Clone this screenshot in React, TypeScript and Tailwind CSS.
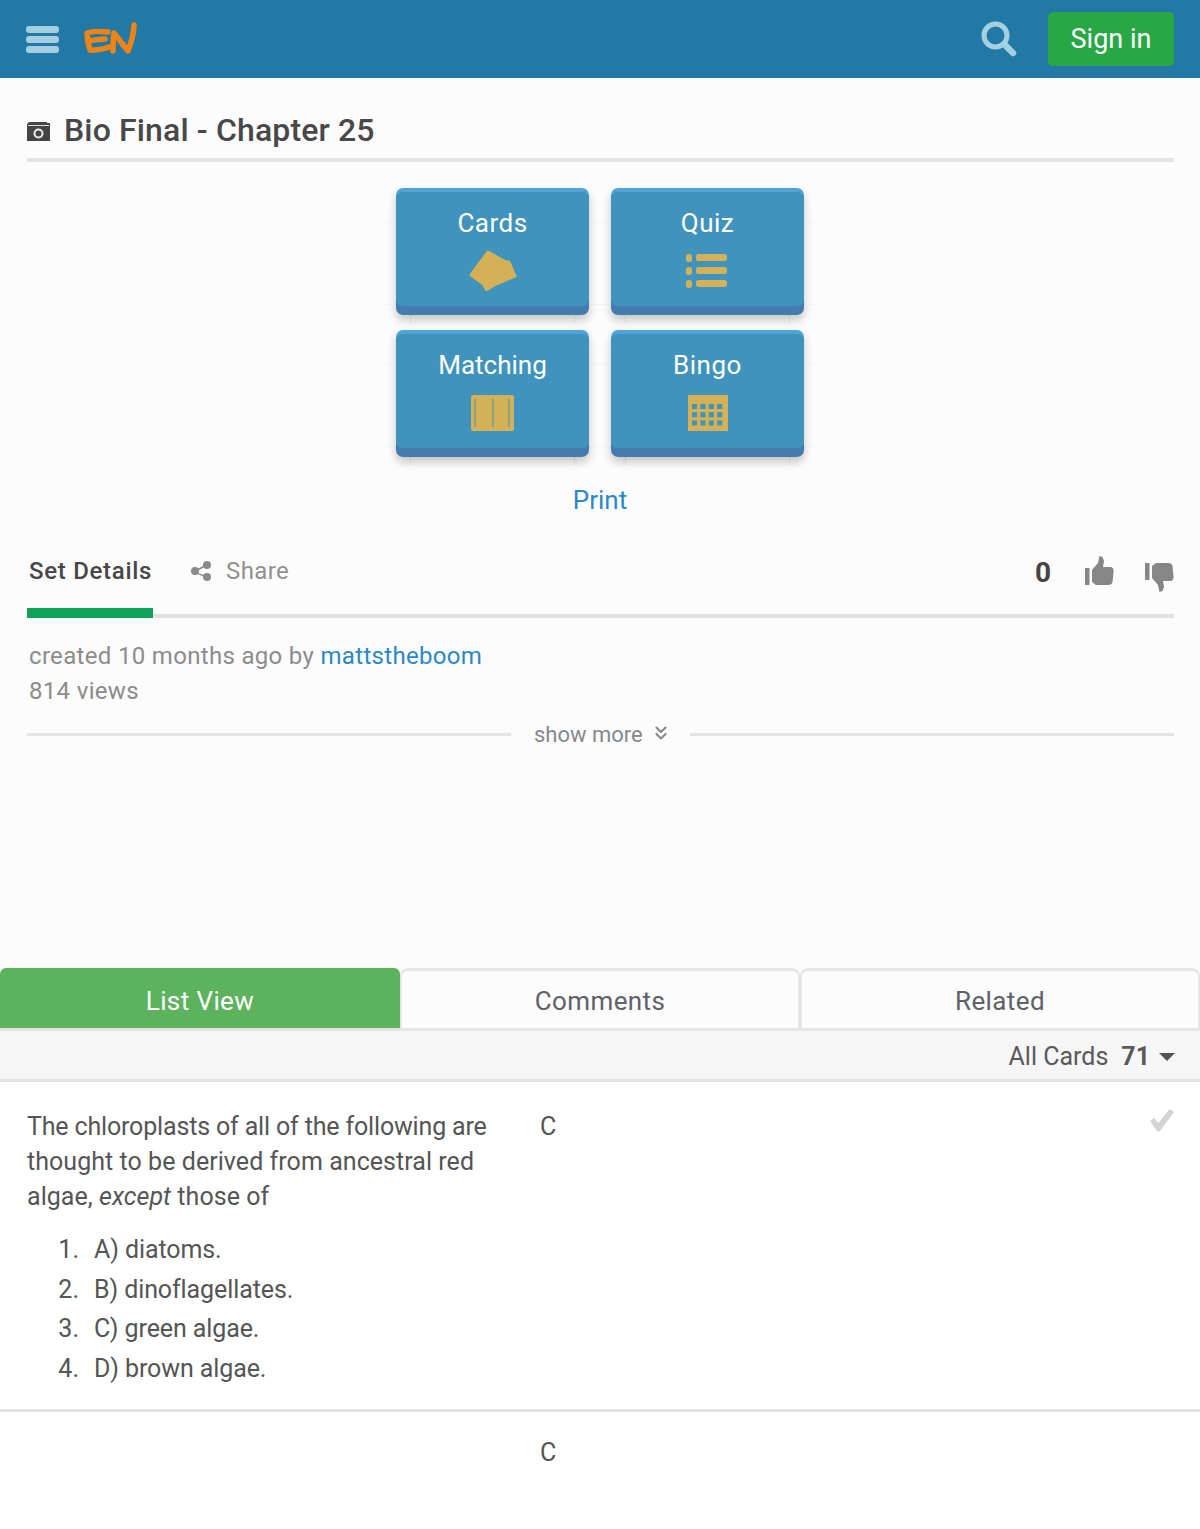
const font = { fontFamily: 'Roboto, sans-serif' }

function CardsIcon() {
  return (
    <svg width="48" height="42" viewBox="0 0 48 42" className="-mt-[1px] fill-[#d4b057] stroke-[#d4b057]" strokeWidth="3" strokeLinejoin="round">
      <path d="M19 2 L36 11.5 L40 12 L46 26 L28 33.5 L17.5 39.5 L14 33.5 L2 25 Z" />
    </svg>
  )
}

function QuizIcon() {
  return (
    <svg width="42" height="36" viewBox="0 0 42 36" className="-ml-[2px] mt-[2px] fill-[#d4b057]">
      <rect x="0" y="0" width="6" height="8" rx="2.5" />
      <rect x="10" y="0" width="31" height="7" rx="2.5" />
      <rect x="0" y="13" width="6" height="8" rx="2.5" />
      <rect x="10" y="13" width="31" height="7" rx="2.5" />
      <rect x="0" y="26" width="6" height="8" rx="2.5" />
      <rect x="10" y="26" width="31" height="7" rx="2.5" />
    </svg>
  )
}

function MatchingIcon() {
  return (
    <svg width="43" height="36" viewBox="0 0 43 36">
      <rect width="43" height="36" rx="2" fill="#d4b057" />
      <rect x="3.5" y="4" width="1" height="28" fill="#3f93bc" />
      <rect x="21.5" y="4" width="1" height="28" fill="#3f93bc" />
      <rect x="37.5" y="4" width="1" height="28" fill="#3f93bc" />
    </svg>
  )
}

function BingoIcon() {
  const cells = []
  for (let r = 0; r < 3; r++) {
    for (let c = 0; c < 4; c++) {
      cells.push(<rect key={`${r}-${c}`} x={4 + c * 8.4} y={9 + r * 8.2} width="5" height="5" fill="#3f93bc" />)
    }
  }
  return (
    <svg width="40" height="36" viewBox="0 0 40 36">
      <rect width="40" height="36" fill="#d4b057" />
      {cells}
    </svg>
  )
}

function ThumbIcon({ className }: { className: string }) {
  return (
    <svg width="29" height="30" viewBox="0 0 29 30" className={className}>
      <rect x="0" y="12" width="4.5" height="17" />
      <path d="M7 14 L13 7 L14.5 0 L17.5 1 L19 5 L18 11 L26 11 Q29 12 28.5 16 L27.5 26 Q27 29 23 29 L11 29 L7 26 Z" />
    </svg>
  )
}

function GameButton({ label, tracking, children }: { label: string; tracking: string; children: React.ReactNode }) {
  return (
    <div className="relative h-[127px] w-[193px]">
      <div className="absolute -inset-x-[12px] top-[34px] bottom-[10px] border-y border-[#f6f6f6]" />
      <div className="absolute inset-x-[14px] -bottom-[8px] h-[20px] border-x border-[#ececec]" />
      <div className="relative h-full rounded-[7px] bg-[linear-gradient(#4fa3d9_50%,#467bad_50%)] pt-[4px] pb-[9px] shadow-[0_5px_10px_rgba(0,0,0,0.22)]">
        <div className="flex h-full flex-col items-center rounded-[6px] bg-[#3f93bc]">
          <span className={`mt-[14px] text-[26px] leading-[34px] text-white ${tracking}`}>{label}</span>
          <div className="mt-[11px] flex h-[40px] items-center justify-center">{children}</div>
        </div>
      </div>
    </div>
  )
}

function Tab({ label, active }: { label: string; active?: boolean }) {
  if (active) {
    return (
      <div className="flex h-[63px] w-[400px] items-center justify-center rounded-t-[6px] border-b-[3px] border-[#e4e4e4] bg-[#5cb25d] pt-[7px] text-[26px] tracking-[0.4px] text-white">
        {label}
      </div>
    )
  }
  return (
    <div className="flex h-[63px] w-[400px] items-center justify-center rounded-t-[8px] border-x-[2px] border-t-[3px] border-b-[3px] border-[#e6e6e6] bg-[#fcfcfc] pt-[4px] text-[26px] tracking-[0.4px] text-[#5f6068]">
      {label}
    </div>
  )
}

function OptionRow({ n, text }: { n: number; text: string }) {
  return (
    <li className="flex h-[39.5px] items-center">
      <span className="w-[52px] text-right">{n}.</span>
      <span className="ml-[15px] tracking-[-0.1px]">{text}</span>
    </li>
  )
}

export default function App() {
  return (
    <div style={font} className="h-[1529px] w-[1200px] overflow-hidden bg-[#fcfcfc] text-[#4a4a4a]">
      <header className="flex h-[78px] items-center justify-between bg-[#2379a6] pl-[26px] pr-[26px]">
        <div className="flex items-center">
          <div className="mt-[1px] flex h-[27px] w-[33px] flex-col justify-between">
            <div className="h-[7px] rounded-[3px] bg-[#a3cfe0]" />
            <div className="h-[7px] rounded-[3px] bg-[#a3cfe0]" />
            <div className="h-[7px] rounded-[3px] bg-[#a3cfe0]" />
          </div>
          <svg width="54" height="34" viewBox="0 0 54 34" fill="none" className="ml-[25px] -mt-[1px]" stroke="#ee8417" strokeWidth="5.5" strokeLinecap="round" strokeLinejoin="round">
            <path d="M24 10 C16 9 9 9 3 11 C3 16 4 22 6 28 C12 29 18 27 26 25" />
            <path d="M5 19 C11 18 16 17 21 17" />
            <path d="M29 29 C29 23 29 17 30 11 C35 17 39 23 44 29 C47 21 50 11 50 3" />
          </svg>
        </div>
        <div className="flex items-center">
          <svg width="36" height="36" viewBox="0 0 36 36" fill="none" className="mr-[31px]" stroke="#a3cfe0" strokeLinecap="round">
            <circle cx="14.5" cy="14.5" r="11.5" strokeWidth="5" />
            <path d="M23.5 23.5 L32 32" strokeWidth="6.5" />
          </svg>
          <div className="flex h-[54px] w-[126px] items-center justify-center rounded-[5px] bg-[#28a745] text-[27px] text-white">Sign in</div>
        </div>
      </header>

      <div className="ml-[27px] mr-[26px] mt-[32px] flex h-[52px] items-start border-b-[4px] border-[#e4e4e4]">
        <svg width="23" height="20" viewBox="0 0 23 20" className="mt-[12px]">
          <path d="M0 2 L2 0 L20 0 L20 1 L23 1 L23 19 L0 19 Z" fill="#444" />
          <rect x="1" y="3" width="21" height="1" fill="#ddd" />
          <circle cx="11.5" cy="11.5" r="4" fill="none" stroke="#eee" strokeWidth="2" />
        </svg>
        <h1 className="ml-[14px] text-[32px] font-medium leading-[40px] tracking-[0.14px] text-[#484848]">Bio Final - Chapter 25</h1>
      </div>

      <div className="mt-[26px] flex justify-center">
        <div className="grid grid-cols-[193px_193px] gap-x-[22px] gap-y-[15px]">
          <GameButton label="Cards" tracking="tracking-[0.5px]"><CardsIcon /></GameButton>
          <GameButton label="Quiz" tracking="tracking-[0.5px]"><QuizIcon /></GameButton>
          <GameButton label="Matching" tracking="tracking-[0px]"><MatchingIcon /></GameButton>
          <GameButton label="Bingo" tracking="tracking-[0.5px]"><BingoIcon /></GameButton>
        </div>
      </div>

      <div className="mt-[25px] text-center text-[26px] leading-[36px] text-[#2b88c8]">Print</div>

      <div className="ml-[27px] mr-[26px] mt-[34px] flex h-[66px] items-start border-b-[4px] border-[#e2e2e2]">
        <div className="relative h-[62px] w-[127px]">
          <span className="ml-[2px] block text-[24px] font-medium leading-[38px] tracking-[0.7px] text-[#474747]">Set Details</span>
          <div className="absolute -bottom-[4px] left-0 h-[10px] w-[126px] bg-[#0fa359]" />
        </div>
        <svg width="20" height="20" viewBox="0 0 20 20" className="ml-[37px] mt-[9px] fill-[#8a8a8a]">
          <circle cx="16" cy="4" r="4" />
          <circle cx="4" cy="10" r="4" />
          <circle cx="16" cy="16" r="4" />
          <path d="M4 9 L16 3 L16 5 L4 11 L16 15 L16 17 L4 12 Z" />
        </svg>
        <span className="ml-[15px] text-[24px] leading-[38px] tracking-[0.4px] text-[#919191]">Share</span>
        <span className="ml-auto mt-[2px] text-[28px] font-bold leading-[38px] text-[#444]">0</span>
        <ThumbIcon className="ml-[34px] mt-[4px] fill-[#868686]" />
        <ThumbIcon className="ml-[31px] mt-[10px] rotate-180 scale-x-[-1] fill-[#868686]" />
      </div>

      <div className="ml-[29px] mt-[21px] text-[24px] leading-[35px] tracking-[0.32px] text-[#8c8c8c]">
        <div>
          created 10 months ago by <span className="text-[#2b88c8]">mattstheboom</span>
        </div>
        <div>814 views</div>
      </div>

      <div className="ml-[27px] mr-[26px] mt-[5px] flex h-[40px] items-center">
        <div className="h-[3px] w-[484px] bg-[#e4e4e4]" />
        <span className="ml-[23px] text-[22px] text-[#84898f]">show more</span>
        <svg width="22" height="22" viewBox="0 0 24 24" fill="none" stroke="#84898f" strokeWidth="2.2" strokeLinecap="round" strokeLinejoin="round" className="ml-[7px] -mt-[2px]">
          <path d="m7 6 5 5 5-5" />
          <path d="m7 13 5 5 5-5" />
        </svg>
        <div className="ml-[18px] h-[3px] flex-1 bg-[#e4e4e4]" />
      </div>

      <div className="mt-[214px] flex h-[63px]">
        <Tab label="List View" active />
        <Tab label="Comments" />
        <Tab label="Related" />
      </div>

      <div className="flex h-[51px] items-center justify-end border-b-[3px] border-[#e4e4e4] bg-[#f6f6f6] pr-[25px] pt-[3px] text-[25px] text-[#5a5a5a]">
        <span>All Cards</span>
        <span className="ml-[13px] font-bold">71</span>
        <span className="ml-[9px] mt-[1px] h-0 w-0 border-x-[8px] border-t-[8px] border-x-transparent border-t-[#555]" />
      </div>

      <div className="flex h-[330px] border-b-[3px] border-[#e4e4e4] bg-white pl-[27px] pr-[26px] text-[25px] text-[#555]">
        <div className="w-[513px] pt-[27px]">
          <p className="w-[480px] leading-[35px]">
            <span className="tracking-[-0.16px]">The chloroplasts of all of the following are</span>{' '}
            <span className="tracking-[0.05px]">
              thought to be derived from ancestral red algae, <em>except</em> those of
            </span>
          </p>
          <ol className="mt-[16px]">
            <OptionRow n={1} text="A) diatoms." />
            <OptionRow n={2} text="B) dinoflagellates." />
            <OptionRow n={3} text="C) green algae." />
            <OptionRow n={4} text="D) brown algae." />
          </ol>
        </div>
        <div className="flex-1 pt-[27px] leading-[35px]">C</div>
        <svg width="24" height="23" viewBox="0 0 24 23" className="mt-[27px] fill-[#d4d4d4]">
          <path d="M0 12 L4 9 L8.5 14 L19.5 0 L24 3 L10 22 Q8.5 23 7 22 Z" />
        </svg>
      </div>

      <div className="h-[120px] bg-white pl-[540px] pt-[23px] text-[25px] leading-[35px] text-[#555]">C</div>
    </div>
  )
}
